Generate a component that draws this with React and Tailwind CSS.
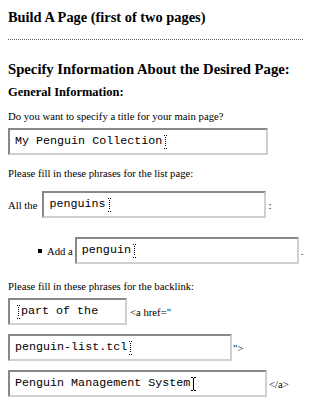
import React from "react";

function Caret({ solid }) {
  return (
    <svg width="5" height="14" viewBox="0 0 5 14" className="inline-block ml-[1px] align-[-3px]">
      {solid ? (
        <path d="M0 0.5H2M3 0.5H5M2.5 1V13M0 13.5H2M3 13.5H5" stroke="#000" strokeWidth="1" fill="none" />
      ) : (
        <path d="M1 0.5H2M3 0.5H4M2.5 2V3M2.5 4V5M2.5 6V7M2.5 8V9M2.5 10V11M1 13.5H2M3 13.5H4" stroke="#000" strokeWidth="1" fill="none" />
      )}
    </svg>
  );
}

function Field({ value, width, solid, caretFirst }) {
  return (
    <div
      className="inline-flex shrink-0 items-center h-[27px] border-2 border-t-[#888] border-l-[#888] border-b-[#d0d0d0] border-r-[#d0d0d0] bg-white pl-[5px] font-['Liberation_Mono'] text-[11.7px] text-black whitespace-pre"
      style={{ width }}
    >
      {caretFirst && <Caret />}
      <span>{value}</span>
      {!caretFirst && <Caret solid={solid} />}
    </div>
  );
}

export default function App() {
  return (
    <div className="min-h-[407px] overflow-hidden bg-white px-2 pt-[8px] font-['Liberation_Serif'] text-black">
      <h1 className="text-[14.4px] font-bold leading-[18px]">Build A Page (first of two pages)</h1>
      <div className="mt-[13px] border-t border-dotted border-[#666]" />

      <h2 className="mt-[20px] text-[14.7px] font-bold leading-[18px] whitespace-nowrap">
        Specify Information About the Desired Page:
      </h2>
      <h3 className="mt-[6px] text-[12.5px] font-bold leading-[16px]">General Information:</h3>

      <p className="mt-[10px] text-[10.7px] leading-[12px]">Do you want to specify a title for your main page?</p>
      <div className="mt-[5px]">
        <Field value="My Penguin Collection" width={260} />
      </div>

      <p className="mt-[12px] text-[10.7px] leading-[12px]">Please fill in these phrases for the list page:</p>
      <div className="mt-[12px] flex items-center whitespace-nowrap text-[10.7px]">
        <span className="mr-[5px]">All the</span>
        <Field value="penguins" width={224} />
        <span className="ml-[2px]">:</span>
      </div>

      <div className="mt-[19px] flex items-center whitespace-nowrap pl-[30px] text-[10.7px]">
        <span className="mr-[5px] inline-block h-[4px] w-[4px] shrink-0 bg-black" />
        <span className="mr-[2px]">Add a</span>
        <Field value="penguin" width={224} />
        <span className="ml-[2px]">.</span>
      </div>

      <p className="mt-[16px] text-[10.7px] leading-[12px]">Please fill in these phrases for the backlink:</p>
      <div className="mt-[6px] flex items-center whitespace-nowrap text-[10.7px]">
        <Field value="part of the" width={119} caretFirst />
        <span className="ml-[3px]">&lt;a href="</span>
      </div>
      <div className="mt-[9px] flex items-center whitespace-nowrap text-[10.7px]">
        <Field value="penguin-list.tcl" width={224} />
        <span className="ml-[1px]">"&gt;</span>
      </div>
      <div className="mt-[9px] flex items-center whitespace-nowrap text-[10.7px]">
        <Field value="Penguin Management System" width={259} solid />
        <span className="ml-[2px]">&lt;/a&gt;</span>
      </div>
    </div>
  );
}
